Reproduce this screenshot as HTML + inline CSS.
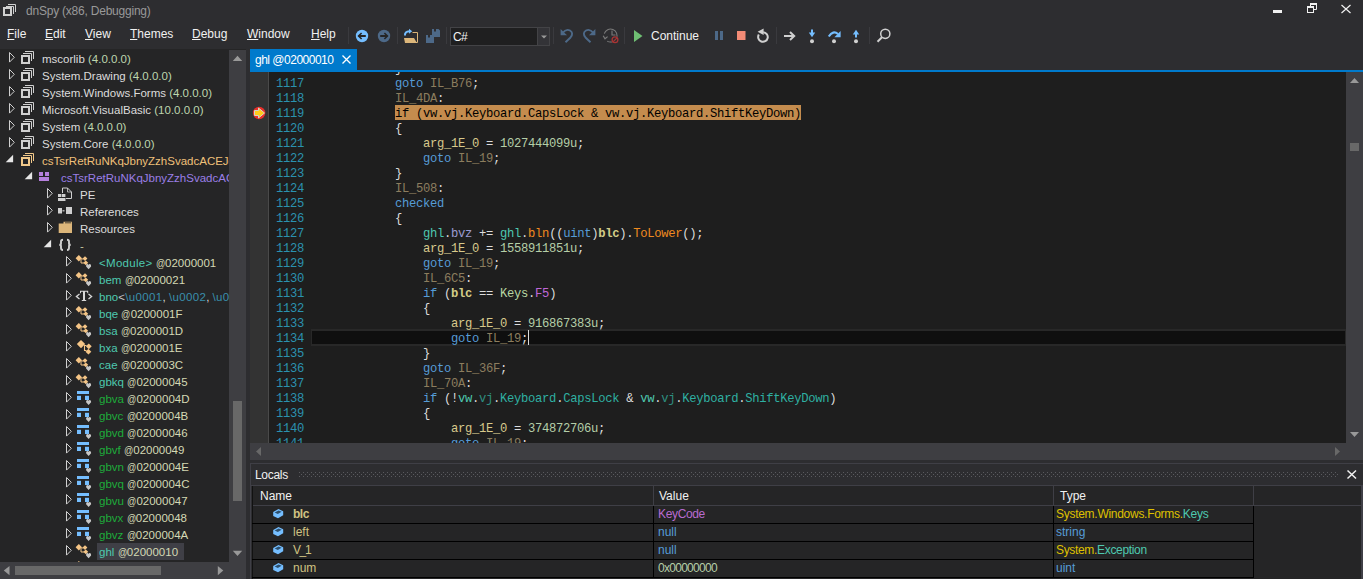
<!DOCTYPE html><html><head><meta charset="utf-8"><style>*{box-sizing:border-box;margin:0;padding:0}
html,body{width:1363px;height:579px;overflow:hidden;background:#2d2d30;font-family:"Liberation Sans",sans-serif;font-size:12px;color:#f1f1f1}
.a{position:absolute}
svg{position:absolute;overflow:visible}
#title{left:26px;top:3px;color:#999999;font-size:12px;line-height:16px;letter-spacing:-0.22px}
.menu{top:26px;line-height:16px;color:#f1f1f1}
.menu u{text-decoration:underline;text-decoration-thickness:1px;text-underline-offset:1px}
.sep{width:1px;height:17px;top:27px;background:#3a3a3e}
#tree{left:0;top:48px;width:229px;height:514px;background:#252526;overflow:hidden}
.row{position:absolute;height:17px;line-height:17px;white-space:nowrap;color:#dcdcdc;font-size:11.5px}
.ver{color:#bdd6ae}
.tn{color:#4ec9b0}
.en{color:#1eac3b}
.tok{color:#d4d9b4}
.at{display:inline-block;transform:scaleX(0.8);transform-origin:0 0;margin-right:-2.4px}
.oasm{color:#efc07a}
.pmod{color:#9b7fe6}
.nsn{color:#c8c8a0}
.gp{color:#c8c8c8;letter-spacing:0.3px}.gp2{color:#3a8fac;letter-spacing:0.35px}
.sel{}
#ed{left:269px;top:72px;width:1077px;height:371px;background:#1e1e1e;overflow:hidden}
#gut{left:250px;top:72px;width:18px;height:371px;background:#333333}
#gutl{left:268px;top:72px;width:1px;height:371px;background:#4a4a4a}
.ln{position:absolute;left:7px;width:28px;text-align:right;font-family:"Liberation Mono",monospace;font-size:12.2px;letter-spacing:-0.32px;line-height:15px;color:#2b91af}
.cl{position:absolute;left:42px;font-family:"Liberation Mono",monospace;font-size:12.2px;letter-spacing:-0.3133px;line-height:15px;color:#dcdcdc;white-space:pre}
.k{color:#569cd6}.lb{color:#8c7d5e}.loc{color:#d8c98c}.num{color:#b5cea8}.ty{color:#4ec9b0}
.fl{color:#9b9bd2}.me{color:#f08a20}.par{color:#d4cd88;font-weight:bold}.ety{color:#b8d7a3}.ef{color:#c068d8}
.sf{color:#2e8f80}.pr{color:#2fb0a2}
.hl{color:#000000}
.hlbox{position:absolute;left:126px;top:33px;width:406px;height:15px;background:#c48c4e}
.curl{position:absolute;left:42px;top:257px;width:1035px;height:17px;border:2px solid #282828;border-left-width:1px;border-right-width:1px;background:#0f0f0f}
.caret{position:absolute;left:259px;top:258px;width:1px;height:15px;background:#dcdcdc}
.tree-row{}
.lh{top:487px;line-height:18px;color:#f1f1f1}
.lr{line-height:17px;color:#dcdcdc;white-space:nowrap}
.lname{color:#d0c282}
.lkc{color:#b86bd0}
.lkw{color:#569cd6}
.lnum{color:#b5cea8}
.lns{color:#dfc000}
.lty{color:#4ec9b0}
</style></head><body>
<svg style="left:0;top:0.7px" width="20" height="20">
 <rect x="4" y="7" width="7" height="7" fill="none" stroke="#d0d0d0" stroke-width="2"/>
 <path d="M6 5.5H13.5V13" fill="none" stroke="#d0d0d0" stroke-width="1"/>
 <path d="M8 3.5H15.5V11" fill="none" stroke="#d0d0d0" stroke-width="1"/>
</svg>
<div class="a" id="title">dnSpy (x86, Debugging)</div>
<svg style="left:0;top:0" width="1363" height="22">
 <rect x="1273" y="10" width="9" height="3" fill="#f1f1f1"/>
 <rect x="1307.5" y="6.5" width="6" height="6" fill="none" stroke="#f1f1f1"/>
 <rect x="1307" y="6" width="7" height="2" fill="#f1f1f1"/>
 <path d="M1310.5 6V3.5H1316.5V9.5H1314" fill="none" stroke="#f1f1f1"/>
 <rect x="1310" y="3" width="7" height="2" fill="#f1f1f1"/>
 <path d="M1341.5 5L1350.5 13M1350.5 5L1341.5 13" stroke="#f1f1f1" stroke-width="1.2"/>
</svg>
<div class="a menu" style="left:7px"><u>F</u>ile</div>
<div class="a menu" style="left:45px"><u>E</u>dit</div>
<div class="a menu" style="left:85px"><u>V</u>iew</div>
<div class="a menu" style="left:130px"><u>T</u>hemes</div>
<div class="a menu" style="left:192px"><u>D</u>ebug</div>
<div class="a menu" style="left:247px"><u>W</u>indow</div>
<div class="a menu" style="left:311px"><u>H</u>elp</div>
<div class="a sep" style="left:348px"></div>
<div class="a sep" style="left:397px"></div>
<div class="a sep" style="left:446px"></div>
<div class="a sep" style="left:553px"></div>
<div class="a sep" style="left:624px"></div>
<div class="a sep" style="left:776px"></div>
<div class="a sep" style="left:869px"></div>
<div class="a" style="left:450px;top:27px;width:100px;height:19px;border:1px solid #434346;background:#1f1f20"></div>
<div class="a" style="left:537px;top:28px;width:12px;height:17px;background:#333337;border-left:1px solid #434346"></div>
<div class="a" style="left:453px;top:29px;line-height:16px;color:#f1f1f1;letter-spacing:-0.6px">C#</div>
<div class="a" style="left:651px;top:28px;line-height:16px;color:#f1f1f1">Continue</div>
<svg style="left:0;top:0" width="1" height="1">
<!-- back / forward -->
<circle cx="362" cy="36" r="6.2" fill="#75beff"/>
<path d="M358.6 36H365.8" stroke="#252526" stroke-width="2"/>
<path d="M361.6 33L358.6 36L361.6 39" fill="none" stroke="#252526" stroke-width="1.6"/>
<circle cx="384" cy="36" r="6.2" fill="#4d6988"/>
<path d="M380.2 36H387.4" stroke="#252526" stroke-width="2"/>
<path d="M384.4 33L387.4 36L384.4 39" fill="none" stroke="#252526" stroke-width="1.6"/>
<!-- open -->
<path d="M412.5 32.5H417.5V42.5H414" fill="none" stroke="#dcb67a" stroke-width="1"/>
<path d="M404 38H414L417 43H405Z" fill="#dcb67a"/>
<path d="M405 35.5Q404.5 31.5 409.5 31.2" fill="none" stroke="#75beff" stroke-width="2"/>
<path d="M409 28.8L412.2 31.2L409 33.8Z" fill="#75beff"/>
<!-- save all -->
<path d="M432 29H434V31.5H436V29H438.5L440 30.5V37H432Z" fill="#4d6988"/>
<path d="M426 35H428V37.5H430V35H432.5L434 36.5V43H426Z" fill="#4d6988"/>
<!-- combo arrow -->
<path d="M541 35.5H547L544 38.5Z" fill="#999999"/>
<!-- undo / redo -->
<path d="M562.5 33Q566 28.5 570 30.5Q574 33 570.5 37.5L565.5 42.3" fill="none" stroke="#4d6988" stroke-width="1.9"/>
<path d="M560.6 29V35.3H567Z" fill="#4d6988"/>
<path d="M593.5 33Q590 28.5 586 30.5Q582 33 585.5 37.5L590.5 42.3" fill="none" stroke="#4d6988" stroke-width="1.9"/>
<path d="M595.4 29V35.3H589Z" fill="#4d6988"/>
<!-- clock disabled -->
<path d="M604.3 33.6A6.5 6.5 0 1 1 607.2 41.1" fill="none" stroke="#7a7a7a" stroke-width="1.1"/>
<path d="M612 30.5V35H615.5" fill="none" stroke="#7a7a7a" stroke-width="1.1"/>
<path d="M603.2 35.8L605 38.8L607.6 36.6" fill="none" stroke="#7a7a7a" stroke-width="1.2"/>
<circle cx="615" cy="39.8" r="3.6" fill="#2d2d30"/>
<circle cx="615" cy="39.8" r="2.9" fill="none" stroke="#a83434" stroke-width="1.3"/>
<path d="M613 41.8L617 37.8" stroke="#a83434" stroke-width="1.2"/>
<!-- play -->
<path d="M634 30V42L642.5 36Z" fill="#6fbf73"/>
<!-- pause -->
<rect x="715" y="31" width="3" height="9" fill="#4d6988"/>
<rect x="720" y="31" width="3" height="9" fill="#4d6988"/>
<!-- stop -->
<rect x="737" y="31" width="8.5" height="9" fill="#f38b76"/>
<!-- restart -->
<path d="M763.2 32.2A4.8 4.8 0 1 1 758.8 34.6" fill="none" stroke="#d0d0d0" stroke-width="2"/>
<path d="M757.6 31.8L763.6 28.6V35Z" fill="#d0d0d0"/>
<!-- show next statement -->
<path d="M784 36H794" stroke="#d0d0d0" stroke-width="2"/>
<path d="M790 32L794.2 36L790 40" fill="none" stroke="#d0d0d0" stroke-width="2"/>
<!-- step into -->
<path d="M812 29.5V34" stroke="#75beff" stroke-width="2"/>
<path d="M808.8 32.6H815.2L812 37.3Z" fill="#75beff"/>
<circle cx="812" cy="41.2" r="2" fill="#d0d0d0"/>
<!-- step over -->
<path d="M828.8 36.5Q833 30 838 34" fill="none" stroke="#75beff" stroke-width="2.2"/>
<path d="M840.6 31V37.2H834.4Z" fill="#75beff"/>
<circle cx="834" cy="41.2" r="2" fill="#d0d0d0"/>
<!-- step out -->
<path d="M856 33V37.5" stroke="#75beff" stroke-width="2"/>
<path d="M852.8 34.4H859.2L856 29.8Z" fill="#75beff"/>
<circle cx="856" cy="41.2" r="2" fill="#d0d0d0"/>
<!-- search -->
<circle cx="885.3" cy="33.8" r="4.6" fill="none" stroke="#d0d0d0" stroke-width="1.5"/>
<path d="M882 37.2L877.5 41.7" stroke="#d0d0d0" stroke-width="2"/>
</svg>

<div class="a" id="tree"><div class="a" style="left:97px;top:495px;width:87px;height:17px;background:#3f3f46"></div>
<div class="row" style="left:42px;top:3px">mscorlib <span class=ver>(4.0.0.0)</span></div>
<div class="row" style="left:42px;top:20px">System.Drawing <span class=ver>(4.0.0.0)</span></div>
<div class="row" style="left:42px;top:37px">System.Windows.Forms <span class=ver>(4.0.0.0)</span></div>
<div class="row" style="left:42px;top:54px">Microsoft.VisualBasic <span class=ver>(10.0.0.0)</span></div>
<div class="row" style="left:42px;top:71px">System <span class=ver>(4.0.0.0)</span></div>
<div class="row" style="left:42px;top:88px">System.Core <span class=ver>(4.0.0.0)</span></div>
<div class="row" style="left:42px;top:105px"><span class=oasm>csTsrRetRuNKqJbnyZzhSvadcACEJd</span></div>
<div class="row" style="left:61px;top:122px"><span class=pmod>csTsrRetRuNKqJbnyZzhSvadcACEJd.exe</span></div>
<div class="row" style="left:80px;top:139px">PE</div>
<div class="row" style="left:80px;top:156px">References</div>
<div class="row" style="left:80px;top:173px">Resources</div>
<div class="row" style="left:80px;top:190px"><span class=nsn>-</span></div>
<div class="row" style="left:99px;top:207px"><span class=tn style="letter-spacing:0.3px">&lt;Module&gt;</span> <span class=tok><span class=at>@</span>02000001</span></div>
<div class="row" style="left:99px;top:224px"><span class=tn>bem</span> <span class=tok><span class=at>@</span>02000021</span></div>
<div class="row" style="left:99px;top:241px"><span class=tn>bno</span><span class=gp>&lt;</span><span class=gp2>\u0001</span>, <span class=gp2>\u0002</span>, <span class=gp2>\u0003&gt;</span></div>
<div class="row" style="left:99px;top:258px"><span class=tn>bqe</span> <span class=tok><span class=at>@</span>0200001F</span></div>
<div class="row" style="left:99px;top:275px"><span class=tn>bsa</span> <span class=tok><span class=at>@</span>0200001D</span></div>
<div class="row" style="left:99px;top:292px"><span class=tn>bxa</span> <span class=tok><span class=at>@</span>0200001E</span></div>
<div class="row" style="left:99px;top:309px"><span class=tn>cae</span> <span class=tok><span class=at>@</span>0200003C</span></div>
<div class="row" style="left:99px;top:326px"><span class=tn>gbkq</span> <span class=tok><span class=at>@</span>02000045</span></div>
<div class="row" style="left:99px;top:343px"><span class=en>gbva</span> <span class=tok><span class=at>@</span>0200004D</span></div>
<div class="row" style="left:99px;top:360px"><span class=en>gbvc</span> <span class=tok><span class=at>@</span>0200004B</span></div>
<div class="row" style="left:99px;top:377px"><span class=en>gbvd</span> <span class=tok><span class=at>@</span>02000046</span></div>
<div class="row" style="left:99px;top:394px"><span class=en>gbvf</span> <span class=tok><span class=at>@</span>02000049</span></div>
<div class="row" style="left:99px;top:411px"><span class=en>gbvn</span> <span class=tok><span class=at>@</span>0200004E</span></div>
<div class="row" style="left:99px;top:428px"><span class=en>gbvq</span> <span class=tok><span class=at>@</span>0200004C</span></div>
<div class="row" style="left:99px;top:445px"><span class=en>gbvu</span> <span class=tok><span class=at>@</span>02000047</span></div>
<div class="row" style="left:99px;top:462px"><span class=en>gbvx</span> <span class=tok><span class=at>@</span>02000048</span></div>
<div class="row" style="left:99px;top:479px"><span class=en>gbvz</span> <span class=tok><span class=at>@</span>0200004A</span></div>
<div class="row" style="left:99px;top:496px"><span class=sel><span class=tn>ghl</span> <span class=tok><span class=at>@</span>02000010</span></span></div>
<div class="row" style="left:99px;top:513px"><span class=tn>gic</span> <span class=tok><span class=at>@</span>02000011</span></div>
<svg style="left:0;top:0" width="229" height="514"><path d="M9.5 4.5L14.3 9.3L9.5 14.1Z" fill="none" stroke="#d0d0d0"/><rect x="22" y="8" width="7" height="7" fill="none" stroke="#d0d0d0" stroke-width="2"/><path d="M23 5.5H31.5V13M25 3.5H33.5V11" fill="none" stroke="#d0d0d0"/><path d="M9.5 21.5L14.3 26.3L9.5 31.1Z" fill="none" stroke="#d0d0d0"/><rect x="22" y="25" width="7" height="7" fill="none" stroke="#d0d0d0" stroke-width="2"/><path d="M23 22.5H31.5V30M25 20.5H33.5V28" fill="none" stroke="#d0d0d0"/><path d="M9.5 38.5L14.3 43.3L9.5 48.1Z" fill="none" stroke="#d0d0d0"/><rect x="22" y="42" width="7" height="7" fill="none" stroke="#d0d0d0" stroke-width="2"/><path d="M23 39.5H31.5V47M25 37.5H33.5V45" fill="none" stroke="#d0d0d0"/><path d="M9.5 55.5L14.3 60.3L9.5 65.1Z" fill="none" stroke="#d0d0d0"/><rect x="22" y="59" width="7" height="7" fill="none" stroke="#d0d0d0" stroke-width="2"/><path d="M23 56.5H31.5V64M25 54.5H33.5V62" fill="none" stroke="#d0d0d0"/><path d="M9.5 72.5L14.3 77.3L9.5 82.1Z" fill="none" stroke="#d0d0d0"/><rect x="22" y="76" width="7" height="7" fill="none" stroke="#d0d0d0" stroke-width="2"/><path d="M23 73.5H31.5V81M25 71.5H33.5V79" fill="none" stroke="#d0d0d0"/><path d="M9.5 89.5L14.3 94.3L9.5 99.1Z" fill="none" stroke="#d0d0d0"/><rect x="22" y="93" width="7" height="7" fill="none" stroke="#d0d0d0" stroke-width="2"/><path d="M23 90.5H31.5V98M25 88.5H33.5V96" fill="none" stroke="#d0d0d0"/><path d="M13.1 106.8V114.2H5.699999999999999Z" fill="#e6e6e6"/><rect x="22" y="110" width="7" height="7" fill="none" stroke="#f2c98a" stroke-width="2"/><path d="M23 107.5H31.5V115M25 105.5H33.5V113" fill="none" stroke="#f2c98a"/><path d="M32.1 123.8V131.2H24.700000000000003Z" fill="#e6e6e6"/><rect x="39" y="124" width="4" height="4" fill="#b680dc"/><rect x="45" y="124" width="4" height="4" fill="#b680dc"/><rect x="39" y="129" width="10" height="4" fill="#b680dc"/><path d="M47.5 140.5L52.3 145.3L47.5 150.1Z" fill="none" stroke="#d0d0d0"/><path d="M62.5 145V140H67.5L71.5 144V150.5H66" fill="none" stroke="#d0d0d0"/><path d="M67.5 140V144H71.5" fill="none" stroke="#d0d0d0" stroke-width="0.8"/><rect x="58" y="146" width="3.4" height="3" fill="#d0d0d0"/><rect x="62" y="146" width="3.4" height="3" fill="#d0d0d0"/><rect x="58" y="150" width="7.5" height="3" fill="#d0d0d0"/><path d="M47.5 157.5L52.3 162.3L47.5 167.1Z" fill="none" stroke="#d0d0d0"/><rect x="58" y="160" width="4" height="5.5" fill="#d0d0d0"/><rect x="62.5" y="162.2" width="2" height="1.2" fill="#d0d0d0"/><rect x="66" y="159" width="6" height="7" fill="#d0d0d0"/><path d="M47.5 174.5L52.3 179.3L47.5 184.1Z" fill="none" stroke="#d0d0d0"/><path d="M58.7 175.5H72V185H58.7Z M63.5 173.7H72V175.5H63.5Z" fill="#dcb67a"/><path d="M65 174.8H71.2" stroke="#252526" stroke-width="0.8"/><path d="M51.1 191.8V199.2H43.7Z" fill="#e6e6e6"/><path d="M63 191.8Q61 191.8 61 193.5V195.5Q61 196.8 59.3 196.8Q61 196.8 61 198.2V200Q61 202 63 202" fill="none" stroke="#d0d0d0" stroke-width="1.9"/><path d="M67 191.8Q69 191.8 69 193.5V195.5Q69 196.8 70.7 196.8Q69 196.8 69 198.2V200Q69 202 67 202" fill="none" stroke="#d0d0d0" stroke-width="1.9"/><path d="M66.5 208.5L71.3 213.3L66.5 218.1Z" fill="none" stroke="#d0d0d0"/><path d="M75.6 210.2L78.8 207.0L82.0 210.2L78.8 213.39999999999998Z" fill="#f5c586"/><path d="M82.6 210.6L85 208.2L87.4 210.6L85 213.0Z" fill="#f5c586"/><path d="M83.39999999999999 214.8L85.8 212.4L88.2 214.8L85.8 217.20000000000002Z" fill="#f5c586"/><path d="M81 211.5V215H84.5M81 211H83.5" fill="none" stroke="#f5c586" stroke-width="1"/><path d="M88.6 221.3L86.1 218.5Q85.7 216.2 87.4 216.1Q88.3 216.1 88.6 217Q88.9 216.1 89.8 216.1Q91.5 216.2 91.1 218.5Z" fill="#c8c8c8"/><path d="M66.5 225.5L71.3 230.3L66.5 235.1Z" fill="none" stroke="#d0d0d0"/><path d="M75.6 227.2L78.8 224.0L82.0 227.2L78.8 230.39999999999998Z" fill="#f5c586"/><path d="M82.6 227.6L85 225.2L87.4 227.6L85 230.0Z" fill="#f5c586"/><path d="M83.39999999999999 231.8L85.8 229.4L88.2 231.8L85.8 234.20000000000002Z" fill="#f5c586"/><path d="M81 228.5V232H84.5M81 228H83.5" fill="none" stroke="#f5c586" stroke-width="1"/><path d="M88.6 238.3L86.1 235.5Q85.7 233.2 87.4 233.1Q88.3 233.1 88.6 234Q88.9 233.1 89.8 233.1Q91.5 233.2 91.1 235.5Z" fill="#c8c8c8"/><path d="M66.5 242.5L71.3 247.3L66.5 252.1Z" fill="none" stroke="#d0d0d0"/><path d="M79.5 246L76.4 248.5L79.5 251M88.5 246L91.6 248.5L88.5 251" fill="none" stroke="#d8d8d8" stroke-width="1.3"/><path d="M80 242.7H88.2V245.2H87.4L87 243.8H85V252H86.2V253H81.8V252H83V243.8H81.2L80.8 245.2H80Z" fill="#d8d8d8"/><path d="M66.5 259.5L71.3 264.3L66.5 269.1Z" fill="none" stroke="#d0d0d0"/><path d="M75.6 261.2L78.8 258.0L82.0 261.2L78.8 264.4Z" fill="#f5c586"/><path d="M82.6 261.6L85 259.20000000000005L87.4 261.6L85 264.0Z" fill="#f5c586"/><path d="M83.39999999999999 265.8L85.8 263.40000000000003L88.2 265.8L85.8 268.2Z" fill="#f5c586"/><path d="M81 262.5V266H84.5M81 262H83.5" fill="none" stroke="#f5c586" stroke-width="1"/><path d="M88.6 272.3L86.1 269.5Q85.7 267.2 87.4 267.1Q88.3 267.1 88.6 268Q88.9 267.1 89.8 267.1Q91.5 267.2 91.1 269.5Z" fill="#c8c8c8"/><path d="M66.5 276.5L71.3 281.3L66.5 286.1Z" fill="none" stroke="#d0d0d0"/><path d="M75.6 278.2L78.8 275.0L82.0 278.2L78.8 281.4Z" fill="#f5c586"/><path d="M82.6 278.6L85 276.20000000000005L87.4 278.6L85 281.0Z" fill="#f5c586"/><path d="M83.39999999999999 282.8L85.8 280.40000000000003L88.2 282.8L85.8 285.2Z" fill="#f5c586"/><path d="M81 279.5V283H84.5M81 279H83.5" fill="none" stroke="#f5c586" stroke-width="1"/><path d="M88.6 289.3L86.1 286.5Q85.7 284.2 87.4 284.1Q88.3 284.1 88.6 285Q88.9 284.1 89.8 284.1Q91.5 284.2 91.1 286.5Z" fill="#c8c8c8"/><path d="M66.5 293.5L71.3 298.3L66.5 303.1Z" fill="none" stroke="#d0d0d0"/><path d="M76.8 296.1L81 291.90000000000003L85.2 296.1L81 300.3Z" fill="#f5c586"/><path d="M85.89999999999999 298.3L88.8 295.40000000000003L91.7 298.3L88.8 301.2Z" fill="#f5c586"/><path d="M85.5 303.7L88.4 300.8L91.30000000000001 303.7L88.4 306.59999999999997Z" fill="#f5c586"/><path d="M84.5 297.5V302.5H86.5M84 297.5H86.5" fill="none" stroke="#f5c586" stroke-width="1.1"/><path d="M66.5 310.5L71.3 315.3L66.5 320.1Z" fill="none" stroke="#d0d0d0"/><path d="M75.6 312.2L78.8 309.0L82.0 312.2L78.8 315.4Z" fill="#f5c586"/><path d="M82.6 312.6L85 310.20000000000005L87.4 312.6L85 315.0Z" fill="#f5c586"/><path d="M83.39999999999999 316.8L85.8 314.40000000000003L88.2 316.8L85.8 319.2Z" fill="#f5c586"/><path d="M81 313.5V317H84.5M81 313H83.5" fill="none" stroke="#f5c586" stroke-width="1"/><path d="M88.6 323.3L86.1 320.5Q85.7 318.2 87.4 318.1Q88.3 318.1 88.6 319Q88.9 318.1 89.8 318.1Q91.5 318.2 91.1 320.5Z" fill="#c8c8c8"/><path d="M66.5 327.5L71.3 332.3L66.5 337.1Z" fill="none" stroke="#d0d0d0"/><path d="M75.6 329.2L78.8 326.0L82.0 329.2L78.8 332.4Z" fill="#f5c586"/><path d="M82.6 329.6L85 327.20000000000005L87.4 329.6L85 332.0Z" fill="#f5c586"/><path d="M83.39999999999999 333.8L85.8 331.40000000000003L88.2 333.8L85.8 336.2Z" fill="#f5c586"/><path d="M81 330.5V334H84.5M81 330H83.5" fill="none" stroke="#f5c586" stroke-width="1"/><path d="M88.6 340.3L86.1 337.5Q85.7 335.2 87.4 335.1Q88.3 335.1 88.6 336Q88.9 335.1 89.8 335.1Q91.5 335.2 91.1 337.5Z" fill="#c8c8c8"/><path d="M66.5 344.5L71.3 349.3L66.5 354.1Z" fill="none" stroke="#d0d0d0"/><rect x="77" y="343" width="12" height="3" fill="#75beff"/><rect x="77" y="347.8" width="4" height="4.2" fill="#75beff"/><rect x="85" y="347.8" width="4" height="4.2" fill="#75beff"/><path d="M88.6 357.1L86.1 354.3Q85.7 352.0 87.4 351.90000000000003Q88.3 351.90000000000003 88.6 352.8Q88.9 351.90000000000003 89.8 351.90000000000003Q91.5 352.0 91.1 354.3Z" fill="#c8c8c8"/><path d="M66.5 361.5L71.3 366.3L66.5 371.1Z" fill="none" stroke="#d0d0d0"/><rect x="77" y="360" width="12" height="3" fill="#75beff"/><rect x="77" y="364.8" width="4" height="4.2" fill="#75beff"/><rect x="85" y="364.8" width="4" height="4.2" fill="#75beff"/><path d="M88.6 374.1L86.1 371.3Q85.7 369.0 87.4 368.90000000000003Q88.3 368.90000000000003 88.6 369.8Q88.9 368.90000000000003 89.8 368.90000000000003Q91.5 369.0 91.1 371.3Z" fill="#c8c8c8"/><path d="M66.5 378.5L71.3 383.3L66.5 388.1Z" fill="none" stroke="#d0d0d0"/><rect x="77" y="377" width="12" height="3" fill="#75beff"/><rect x="77" y="381.8" width="4" height="4.2" fill="#75beff"/><rect x="85" y="381.8" width="4" height="4.2" fill="#75beff"/><path d="M88.6 391.1L86.1 388.3Q85.7 386.0 87.4 385.90000000000003Q88.3 385.90000000000003 88.6 386.8Q88.9 385.90000000000003 89.8 385.90000000000003Q91.5 386.0 91.1 388.3Z" fill="#c8c8c8"/><path d="M66.5 395.5L71.3 400.3L66.5 405.1Z" fill="none" stroke="#d0d0d0"/><rect x="77" y="394" width="12" height="3" fill="#75beff"/><rect x="77" y="398.8" width="4" height="4.2" fill="#75beff"/><rect x="85" y="398.8" width="4" height="4.2" fill="#75beff"/><path d="M88.6 408.1L86.1 405.3Q85.7 403.0 87.4 402.90000000000003Q88.3 402.90000000000003 88.6 403.8Q88.9 402.90000000000003 89.8 402.90000000000003Q91.5 403.0 91.1 405.3Z" fill="#c8c8c8"/><path d="M66.5 412.5L71.3 417.3L66.5 422.1Z" fill="none" stroke="#d0d0d0"/><rect x="77" y="411" width="12" height="3" fill="#75beff"/><rect x="77" y="415.8" width="4" height="4.2" fill="#75beff"/><rect x="85" y="415.8" width="4" height="4.2" fill="#75beff"/><path d="M88.6 425.1L86.1 422.3Q85.7 420.0 87.4 419.90000000000003Q88.3 419.90000000000003 88.6 420.8Q88.9 419.90000000000003 89.8 419.90000000000003Q91.5 420.0 91.1 422.3Z" fill="#c8c8c8"/><path d="M66.5 429.5L71.3 434.3L66.5 439.1Z" fill="none" stroke="#d0d0d0"/><rect x="77" y="428" width="12" height="3" fill="#75beff"/><rect x="77" y="432.8" width="4" height="4.2" fill="#75beff"/><rect x="85" y="432.8" width="4" height="4.2" fill="#75beff"/><path d="M88.6 442.1L86.1 439.3Q85.7 437.0 87.4 436.90000000000003Q88.3 436.90000000000003 88.6 437.8Q88.9 436.90000000000003 89.8 436.90000000000003Q91.5 437.0 91.1 439.3Z" fill="#c8c8c8"/><path d="M66.5 446.5L71.3 451.3L66.5 456.1Z" fill="none" stroke="#d0d0d0"/><rect x="77" y="445" width="12" height="3" fill="#75beff"/><rect x="77" y="449.8" width="4" height="4.2" fill="#75beff"/><rect x="85" y="449.8" width="4" height="4.2" fill="#75beff"/><path d="M88.6 459.1L86.1 456.3Q85.7 454.0 87.4 453.90000000000003Q88.3 453.90000000000003 88.6 454.8Q88.9 453.90000000000003 89.8 453.90000000000003Q91.5 454.0 91.1 456.3Z" fill="#c8c8c8"/><path d="M66.5 463.5L71.3 468.3L66.5 473.1Z" fill="none" stroke="#d0d0d0"/><rect x="77" y="462" width="12" height="3" fill="#75beff"/><rect x="77" y="466.8" width="4" height="4.2" fill="#75beff"/><rect x="85" y="466.8" width="4" height="4.2" fill="#75beff"/><path d="M88.6 476.1L86.1 473.3Q85.7 471.0 87.4 470.90000000000003Q88.3 470.90000000000003 88.6 471.8Q88.9 470.90000000000003 89.8 470.90000000000003Q91.5 471.0 91.1 473.3Z" fill="#c8c8c8"/><path d="M66.5 480.5L71.3 485.3L66.5 490.1Z" fill="none" stroke="#d0d0d0"/><rect x="77" y="479" width="12" height="3" fill="#75beff"/><rect x="77" y="483.8" width="4" height="4.2" fill="#75beff"/><rect x="85" y="483.8" width="4" height="4.2" fill="#75beff"/><path d="M88.6 493.1L86.1 490.3Q85.7 488.0 87.4 487.90000000000003Q88.3 487.90000000000003 88.6 488.8Q88.9 487.90000000000003 89.8 487.90000000000003Q91.5 488.0 91.1 490.3Z" fill="#c8c8c8"/><path d="M66.5 497.5L71.3 502.3L66.5 507.1Z" fill="none" stroke="#d0d0d0"/><path d="M75.6 499.2L78.8 496.0L82.0 499.2L78.8 502.4Z" fill="#f5c586"/><path d="M82.6 499.6L85 497.20000000000005L87.4 499.6L85 502.0Z" fill="#f5c586"/><path d="M83.39999999999999 503.8L85.8 501.40000000000003L88.2 503.8L85.8 506.2Z" fill="#f5c586"/><path d="M81 500.5V504H84.5M81 500H83.5" fill="none" stroke="#f5c586" stroke-width="1"/><path d="M88.6 510.3L86.1 507.5Q85.7 505.2 87.4 505.1Q88.3 505.1 88.6 506Q88.9 505.1 89.8 505.1Q91.5 505.2 91.1 507.5Z" fill="#c8c8c8"/><path d="M66.5 514.5L71.3 519.3L66.5 524.1Z" fill="none" stroke="#d0d0d0"/><path d="M75.6 516.2L78.8 513.0L82.0 516.2L78.8 519.4000000000001Z" fill="#f5c586"/><path d="M82.6 516.6L85 514.2L87.4 516.6L85 519.0Z" fill="#f5c586"/><path d="M83.39999999999999 520.8L85.8 518.4L88.2 520.8L85.8 523.1999999999999Z" fill="#f5c586"/><path d="M81 517.5V521H84.5M81 517H83.5" fill="none" stroke="#f5c586" stroke-width="1"/><path d="M88.6 527.3L86.1 524.5Q85.7 522.2 87.4 522.1Q88.3 522.1 88.6 523Q88.9 522.1 89.8 522.1Q91.5 522.2 91.1 524.5Z" fill="#c8c8c8"/></svg>
</div>
<div class="a" style="left:0;top:48px;width:229px;height:1px;background:#2d2d30;z-index:2"></div>
<div class="a" style="left:229px;top:49px;width:17px;height:513px;background:#252526"></div>
<div class="a" style="left:229px;top:50px;width:17px;height:512px;background:#3e3e42"></div>
<div class="a" style="left:0;top:562px;width:246px;height:17px;background:#3e3e42"></div>
<svg style="left:0;top:0" width="1" height="1">
<path d="M232.8 61H242.2L237.5 55.8Z" fill="#999999"/>
<rect x="233" y="401" width="9" height="100" fill="#686868"/>
<path d="M232.8 550.8H242.2L237.5 556Z" fill="#999999"/>
<path d="M9.5 566V575.3L3.8 570.6Z" fill="#999999"/>
<rect x="15" y="566" width="146" height="9" fill="#686868"/>
<path d="M217.8 566V575.3L223.3 570.6Z" fill="#999999"/>
</svg>

<div class="a" style="left:250px;top:49px;width:107px;height:21px;background:#007acc"></div>
<div class="a" style="left:255px;top:52px;line-height:16px;color:#ffffff;letter-spacing:-0.5px;font-size:12px" id="tabt">ghl @02000010</div>
<svg style="left:0;top:0" width="1" height="1"><path d="M342.5 55.5L350.5 63.5M350.5 55.5L342.5 63.5" stroke="#ffffff" stroke-width="1.3"/></svg>
<div class="a" style="left:250px;top:70px;width:1113px;height:2px;background:#007acc"></div>
<div class="a" id="gut"></div><div class="a" id="gutl"></div>
<div class="a" id="ed">
<div class="curl"></div><div class="hlbox"></div>
<div class="cl" style="top:-10px">            }</div>
<div class="ln" style="top:5px">1117</div>
<div class="cl" style="top:5px">            <span class="k">goto</span> <span class="lb">IL_B76</span>;</div>
<div class="ln" style="top:20px">1118</div>
<div class="cl" style="top:20px">            <span class="lb">IL_4DA</span>:</div>
<div class="ln" style="top:35px">1119</div>
<div class="cl" style="top:35px">            <span class="hl">if (vw.vj.Keyboard.CapsLock &amp; vw.vj.Keyboard.ShiftKeyDown)</span></div>
<div class="ln" style="top:50px">1120</div>
<div class="cl" style="top:50px">            {</div>
<div class="ln" style="top:65px">1121</div>
<div class="cl" style="top:65px">                <span class="loc">arg_1E_0</span> = <span class="num">1027444099u</span>;</div>
<div class="ln" style="top:80px">1122</div>
<div class="cl" style="top:80px">                <span class="k">goto</span> <span class="lb">IL_19</span>;</div>
<div class="ln" style="top:95px">1123</div>
<div class="cl" style="top:95px">            }</div>
<div class="ln" style="top:110px">1124</div>
<div class="cl" style="top:110px">            <span class="lb">IL_508</span>:</div>
<div class="ln" style="top:125px">1125</div>
<div class="cl" style="top:125px">            <span class="k">checked</span></div>
<div class="ln" style="top:140px">1126</div>
<div class="cl" style="top:140px">            {</div>
<div class="ln" style="top:155px">1127</div>
<div class="cl" style="top:155px">                <span class="ty">ghl</span>.<span class="fl">bvz</span> += <span class="ty">ghl</span>.<span class="me">bln</span>((<span class="k">uint</span>)<span class="par">blc</span>).<span class="me">ToLower</span>();</div>
<div class="ln" style="top:170px">1128</div>
<div class="cl" style="top:170px">                <span class="loc">arg_1E_0</span> = <span class="num">1558911851u</span>;</div>
<div class="ln" style="top:185px">1129</div>
<div class="cl" style="top:185px">                <span class="k">goto</span> <span class="lb">IL_19</span>;</div>
<div class="ln" style="top:200px">1130</div>
<div class="cl" style="top:200px">                <span class="lb">IL_6C5</span>:</div>
<div class="ln" style="top:215px">1131</div>
<div class="cl" style="top:215px">                <span class="k">if</span> (<span class="par">blc</span> == <span class="ety">Keys</span>.<span class="ef">F5</span>)</div>
<div class="ln" style="top:230px">1132</div>
<div class="cl" style="top:230px">                {</div>
<div class="ln" style="top:245px">1133</div>
<div class="cl" style="top:245px">                    <span class="loc">arg_1E_0</span> = <span class="num">916867383u</span>;</div>
<div class="ln" style="top:260px">1134</div>
<div class="cl" style="top:260px">                    <span class="k">goto</span> <span class="lb">IL_19</span>;</div>
<div class="ln" style="top:275px">1135</div>
<div class="cl" style="top:275px">                }</div>
<div class="ln" style="top:290px">1136</div>
<div class="cl" style="top:290px">                <span class="k">goto</span> <span class="lb">IL_36F</span>;</div>
<div class="ln" style="top:305px">1137</div>
<div class="cl" style="top:305px">                <span class="lb">IL_70A</span>:</div>
<div class="ln" style="top:320px">1138</div>
<div class="cl" style="top:320px">                <span class="k">if</span> (!<span class="ty">vw</span>.<span class="sf">vj</span>.<span class="pr">Keyboard</span>.<span class="pr">CapsLock</span> &amp; <span class="ty">vw</span>.<span class="sf">vj</span>.<span class="pr">Keyboard</span>.<span class="pr">ShiftKeyDown</span>)</div>
<div class="ln" style="top:335px">1139</div>
<div class="cl" style="top:335px">                {</div>
<div class="ln" style="top:350px">1140</div>
<div class="cl" style="top:350px">                    <span class="loc">arg_1E_0</span> = <span class="num">374872706u</span>;</div>
<div class="ln" style="top:365px">1141</div>
<div class="cl" style="top:365px">                    <span class="k">goto</span> <span class="lb">IL_19</span>;</div>
<div class="caret"></div>
</div>
<svg style="left:0;top:0" width="1" height="1">
<circle cx="259.1" cy="113" r="6.2" fill="#e8302a"/>
<path d="M254.5 110.5H258.5V108L264.5 113L258.5 118V115.5H254.5Z" fill="#ffcc1a" stroke="#d0dcdc" stroke-width="0.9"/>
</svg>
<div class="a" style="left:1346px;top:72px;width:17px;height:371px;background:#3e3e42"></div>
<div class="a" style="left:250px;top:443px;width:1113px;height:17px;background:#3e3e42"></div>
<svg style="left:0;top:0" width="1" height="1">
<path d="M1350 83H1359L1354.5 78Z" fill="#999999"/>
<rect x="1350" y="143" width="9" height="8" fill="#686868"/>
<path d="M1350 432H1359L1354.5 437Z" fill="#999999"/>
<path d="M261 447V456L256 451.5Z" fill="#686868"/>
<path d="M1335 447V456L1340 451.5Z" fill="#686868"/>
</svg>
<div class="a" style="left:250px;top:463px;width:1113px;height:116px;background:#2d2d30;border-top:1px solid #3f3f46;border-left:1px solid #3f3f46"></div>
<div class="a" style="left:255px;top:467px;line-height:16px;color:#f1f1f1;letter-spacing:-0.3px">Locals</div>
<svg style="left:0;top:0" width="1" height="1">
<defs><pattern id="grip" x="299" y="472" width="4" height="4" patternUnits="userSpaceOnUse">
<rect x="0" y="0" width="1" height="1" fill="#5a5a5e"/><rect x="2" y="2" width="1" height="1" fill="#5a5a5e"/></pattern></defs>
<rect x="299" y="472" width="1040" height="5" fill="url(#grip)"/>
<path d="M1347.5 470.5L1356 478.5M1356 470.5L1347.5 478.5" stroke="#f1f1f1" stroke-width="1.5"/>
</svg>
<div class="a" style="left:250px;top:485px;width:1113px;height:1px;background:#3f3f46"></div>
<div class="a" style="left:252px;top:486px;width:1109px;height:93px;background:#252526;border-left:1px solid #111"></div>
<div class="a" style="left:253px;top:505px;width:1108px;height:1px;background:#3f3f46"></div>
<div class="a" style="left:653px;top:486px;width:1px;height:19px;background:#3f3f46"></div>
<div class="a" style="left:1053px;top:486px;width:1px;height:19px;background:#3f3f46"></div>
<div class="a" style="left:1253px;top:486px;width:1px;height:19px;background:#3f3f46"></div>
<div class="a" style="left:1361px;top:486px;width:2px;height:93px;background:#3f3f46"></div>
<div class="a lh" style="left:260px">Name</div>
<div class="a lh" style="left:659px">Value</div>
<div class="a lh" style="left:1060px">Type</div>
<div class="a" style="left:252px;top:523px;width:1002px;height:1px;background:#000"></div>
<div class="a lr" style="left:293px;top:506px;font-weight:bold"><span class="lname" style="letter-spacing:-0.5px">blc</span></div>
<div class="a lr" style="left:658px;top:506px"><span class="lkc" style="letter-spacing:-0.35px">KeyCode</span></div>
<div class="a lr" style="left:1056px;top:506px"><span style="letter-spacing:-0.28px"><span class="lns">System.Windows.Forms.</span><span class="lty">Keys</span></span></div>
<svg style="left:0;top:0" width="1" height="1">
<path d="M273.2 512L278.5 509L283.2 511.3V515.3L278 518.3L273.2 516Z" fill="#75beff"/>
<path d="M274.6 512.6L278.6 510.4L281.6 511.8L277.8 514Z" fill="#2d4f6c"/>
</svg>
<div class="a" style="left:252px;top:541px;width:1002px;height:1px;background:#000"></div>
<div class="a lr" style="left:293px;top:524px;"><span class="lname">left</span></div>
<div class="a lr" style="left:658px;top:524px"><span class="lkw">null</span></div>
<div class="a lr" style="left:1056px;top:524px"><span class="lkw">string</span></div>
<svg style="left:0;top:0" width="1" height="1">
<path d="M273.2 530L278.5 527L283.2 529.3V533.3L278 536.3L273.2 534Z" fill="#75beff"/>
<path d="M274.6 530.6L278.6 528.4L281.6 529.8L277.8 532Z" fill="#2d4f6c"/>
</svg>
<div class="a" style="left:252px;top:559px;width:1002px;height:1px;background:#000"></div>
<div class="a lr" style="left:293px;top:542px;"><span class="lname" style="letter-spacing:-1.4px">V_1</span></div>
<div class="a lr" style="left:658px;top:542px"><span class="lkw">null</span></div>
<div class="a lr" style="left:1056px;top:542px"><span style="letter-spacing:-0.33px"><span class="lns">System.</span><span class="lty">Exception</span></span></div>
<svg style="left:0;top:0" width="1" height="1">
<path d="M273.2 548L278.5 545L283.2 547.3V551.3L278 554.3L273.2 552Z" fill="#75beff"/>
<path d="M274.6 548.6L278.6 546.4L281.6 547.8L277.8 550Z" fill="#2d4f6c"/>
</svg>
<div class="a" style="left:252px;top:577px;width:1002px;height:1px;background:#000"></div>
<div class="a lr" style="left:293px;top:560px;"><span class="lname">num</span></div>
<div class="a lr" style="left:658px;top:560px"><span class="lnum" style="letter-spacing:-0.72px">0x00000000</span></div>
<div class="a lr" style="left:1056px;top:560px"><span class="lkw">uint</span></div>
<svg style="left:0;top:0" width="1" height="1">
<path d="M273.2 566L278.5 563L283.2 565.3V569.3L278 572.3L273.2 570Z" fill="#75beff"/>
<path d="M274.6 566.6L278.6 564.4L281.6 565.8L277.8 568Z" fill="#2d4f6c"/>
</svg>
<div class="a" style="left:653px;top:506px;width:1px;height:72px;background:#000"></div>
<div class="a" style="left:1053px;top:506px;width:1px;height:72px;background:#000"></div>
<div class="a" style="left:1253px;top:506px;width:1px;height:72px;background:#000"></div>
</body></html>
